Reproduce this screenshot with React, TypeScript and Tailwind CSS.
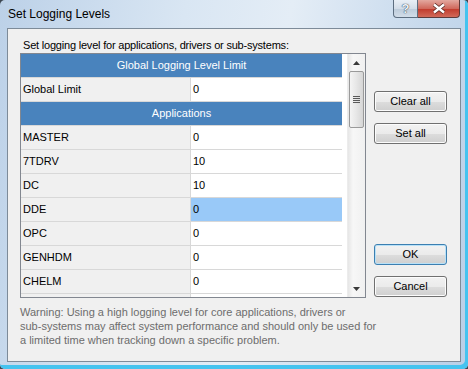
const rows: { name: string; value: string; header?: boolean; selected?: boolean }[] = [
  { name: "Global Logging Level Limit", value: "", header: true },
  { name: "Global Limit", value: "0" },
  { name: "Applications", value: "", header: true },
  { name: "MASTER", value: "0" },
  { name: "7TDRV", value: "10" },
  { name: "DC", value: "10" },
  { name: "DDE", value: "0", selected: true },
  { name: "OPC", value: "0" },
  { name: "GENHDM", value: "0" },
  { name: "CHELM", value: "0" },
  { name: "", value: "" },
];

function Arrow({ down }: { down?: boolean }) {
  return (
    <svg width="7" height="4" viewBox="0 0 7 4">
      <path d={down ? "M0 0h7L3.5 4z" : "M0 4h7L3.5 0z"} fill="#3a3a3a" />
    </svg>
  );
}

function Scrollbar() {
  return (
    <div className="w-[18px] h-full flex flex-col bg-[linear-gradient(90deg,#e6e6e6,#f7f7f7_30%,#f0f0f0)] border-l border-[#ececec]">
      <div className="h-[17px] flex items-center justify-center">
        <Arrow />
      </div>
      <div className="h-[57px] mx-[1px] rounded-[2px] border border-[#9a9a9a] bg-[linear-gradient(90deg,#f4f4f4,#e6e6e6_50%,#d6d6d6)] flex flex-col items-center justify-center gap-[1px]">
        {[0, 1, 2, 3].map((i) => (
          <div key={i} className="w-[7px] h-[1px] bg-[#5a5a5a]" />
        ))}
      </div>
      <div className="flex-1" />
      <div className="h-[17px] flex items-center justify-center">
        <Arrow down />
      </div>
    </div>
  );
}

function Button({ label, primary }: { label: string; primary?: boolean }) {
  return (
    <button
      className={
        "w-[73px] h-[21px] rounded-[3px] border text-[11px] text-black leading-none bg-[linear-gradient(to_bottom,#f2f2f2_0%,#ebebeb_50%,#dddddd_51%,#cfcfcf_100%)] " +
        (primary
          ? "border-[#3c7fb1] shadow-[inset_0_0_0_1px_#b9e1f7]"
          : "border-[#707070] shadow-[inset_0_0_0_1px_#fcfcfc]")
      }
    >
      {label}
    </button>
  );
}

export default function App() {
  return (
    <div className="w-[468px] h-[369px] bg-[#3d4752] font-['Liberation_Sans',Arial,sans-serif]">
      <div className="w-full h-full rounded-[5px] flex flex-col overflow-hidden bg-[linear-gradient(100deg,#bcd1e8_0%,#d9e6f3_35%,#e4edf6_55%,#c8daed_80%,#b9cfe7_100%)] shadow-[inset_-3px_-4px_0_#45c3ef]">
        {/* title bar */}
        <div className="h-[28px] flex justify-between items-start">
          <span className="pl-[8px] pt-[7px] text-[12px] leading-[14px] text-black">Set Logging Levels</span>
          <div className="flex mr-[8px]">
            <div className="w-[25px] h-[18px] rounded-bl-[4px] border border-t-0 border-[#5d6e80] bg-[linear-gradient(to_bottom,#e9eff6,#d3dde8_50%,#bccbda_51%,#d2dde9)] flex items-center justify-center">
              <span className="text-[13px] font-bold leading-none text-[#eef2f6] [text-shadow:0_0_1px_#2c3e50,0_0_1px_#2c3e50]">?</span>
            </div>
            <div className="w-[42px] h-[18px] rounded-br-[4px] border border-l-0 border-t-0 border-[#5d3b3b] bg-[linear-gradient(to_bottom,#e3a89f,#d0695c_50%,#c0392b_51%,#d26a5a)] flex items-center justify-center">
              <svg width="14" height="11" viewBox="0 0 14 11">
                <path d="M2 1.5l10 8M12 1.5l-10 8" stroke="#5a2a24" strokeWidth="4" />
                <path d="M2 1.5l10 8M12 1.5l-10 8" stroke="#ffffff" strokeWidth="2.4" />
              </svg>
            </div>
          </div>
        </div>

        {/* client area */}
        <div className="mx-[7px] h-[334px] border border-[#7d8b99] bg-[#f0f0f0] pl-[12px] pt-[9px]">
          <div className="h-[15px] ml-[3px] text-[11px] leading-[14px] tracking-[-0.2px] text-black">
            Set logging level for applications, drivers or sub-systems:
          </div>
          <div className="flex">
            <div className="w-[346px] h-[245px] border border-[#828790] bg-white flex overflow-hidden">
              <div className="w-[321px] flex flex-col">
                {rows.map((r, i) =>
                  r.header ? (
                    <div
                      key={i}
                      className="h-[24px] shrink-0 bg-[#4983bd] border-b border-[#d8d8d8] flex items-center justify-center text-[11px] text-white"
                    >
                      {r.name}
                    </div>
                  ) : (
                    <div key={i} className="h-[24px] shrink-0 flex border-b border-[#d8d8d8] text-[11px] text-black">
                      <div className="w-[170px] bg-[#f0f0f0] border-r border-[#d8d8d8] pl-[2px] flex items-center">
                        {r.name}
                      </div>
                      <div
                        className={
                          "flex-1 pl-[2px] flex items-center " + (r.selected ? "bg-[#99c9f8]" : "bg-white")
                        }
                      >
                        {r.value}
                      </div>
                    </div>
                  )
                )}
              </div>
              <div className="w-[5px] bg-white" />
              <Scrollbar />
            </div>
            <div className="ml-[8px] h-[245px] flex flex-col">
              <div className="mt-[35px]">
                <Button label="Clear all" />
              </div>
              <div className="mt-[8px]">
                <Button label="Set all" />
              </div>
              <div className="mt-auto">
                <Button label="OK" primary />
              </div>
              <div className="mt-[8px] mb-[1px]">
                <Button label="Cancel" />
              </div>
            </div>
          </div>
          <p className="mt-[7px] text-[11px] leading-[14px] text-[#6d6d6d]">
            Warning: Using a high logging level for core applications, drivers or
            <br />
            sub-systems may affect system performance and should only be used for
            <br />
            a limited time when tracking down a specific problem.
          </p>
        </div>
      </div>
    </div>
  );
}
